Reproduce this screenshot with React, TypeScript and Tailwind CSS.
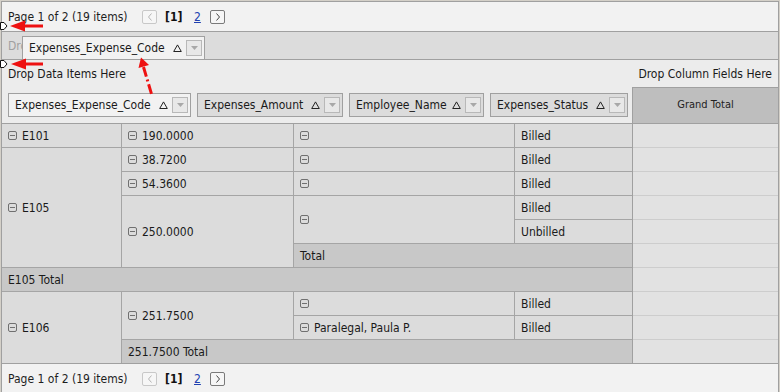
import React from "react";

const Minus = () => (
  <svg width="9" height="9" viewBox="0 0 9 9" className="shrink-0">
    <rect x="0.5" y="0.5" width="8" height="8" rx="1.5" fill="none" stroke="#707070" />
    <line x1="2" y1="4.5" x2="7" y2="4.5" stroke="#707070" />
  </svg>
);

const SortTri = () => (
  <svg width="9" height="8" viewBox="0 0 9 8" className="shrink-0">
    <path d="M4.5 0.9 L8.3 7.5 L0.7 7.5 Z" fill="none" stroke="#222" strokeWidth="1" />
  </svg>
);

const DropBtn = () => (
  <div className="w-[16px] h-[16px] border border-[#b8b8b8] bg-[#e8e8e8] flex items-center justify-center shrink-0">
    <svg width="7" height="4" viewBox="0 0 7 4">
      <path d="M0 0 H7 L3.5 4 Z" fill="#a8a8a8" />
    </svg>
  </div>
);

function FieldBox({ label, className }: { label: string; className: string }) {
  return (
    <div className={"h-[24px] border border-[#a0a0a0] flex items-center pl-[6px] pr-[2px] " + className}>
      <span className="flex-1 whitespace-nowrap overflow-hidden">{label}</span>
      <SortTri />
      <div className="w-[4px]" />
      <DropBtn />
    </div>
  );
}

function Pager() {
  return (
    <div className="h-[29px] flex items-center pl-[6px] text-[12px] text-[#1e1e1e] bg-[#f2f2f2]">
      <span className="w-[124px] whitespace-nowrap">Page 1 of 2 (19 items)</span>
      <div className="ml-[10px] w-[15px] h-[14px] border border-[#c8c8c8] rounded-[2px] bg-[#f6f6f6] flex items-center justify-center">
        <svg width="6" height="8" viewBox="0 0 6 8">
          <path d="M4.5 0.5 L1.5 4 L4.5 7.5" fill="none" stroke="#b4b4b4" strokeWidth="1" />
        </svg>
      </div>
      <span className="ml-[8px] w-[17px] font-bold text-[#111]">[1]</span>
      <span className="ml-[12px] w-[6px] text-[#2040b0] underline">2</span>
      <div className="ml-[10px] w-[15px] h-[14px] border border-[#7a7a7a] rounded-[2px] bg-[#f6f6f6] flex items-center justify-center">
        <svg width="6" height="8" viewBox="0 0 6 8">
          <path d="M1.5 0.5 L4.5 4 L1.5 7.5" fill="none" stroke="#444" strokeWidth="1" />
        </svg>
      </div>
    </div>
  );
}

function Cell({ className, children }: { className: string; children: React.ReactNode }) {
  return <div className={"flex items-center gap-[5px] px-[6px] whitespace-nowrap " + className}>{children}</div>;
}

export default function App() {
  const c = "bg-[#dcdcdc]";
  const t = "bg-[#c8c8c8]";
  return (
    <div className="relative w-[780px] h-[392px] overflow-hidden bg-[#d4d0c8] pt-px pl-px font-[family-name:DejaVu_Sans_Condensed,DejaVu_Sans,sans-serif] font-stretch-condensed text-[12px] text-[#1a1a1a]">
      <div className="w-[778px] border border-[#a0a0a0] bg-[#f2f2f2]">
        <div className="border-b border-[#a0a0a0]">
          <Pager />
        </div>
        <div className="h-[28px] border-b border-[#a0a0a0] bg-[#dcdcdc] flex items-center pl-[6px] text-[#a0a0a0]">
          Dro
        </div>
        <div className="h-[27px] bg-[#ececec] flex items-center justify-between px-[6px]">
          <span>Drop Data Items Here</span>
          <span>Drop Column Fields Here</span>
        </div>
        <div className="h-[36px] bg-[#ececec] flex">
          <div className="w-[630px] flex items-center gap-[6px] pl-[6px]">
            <FieldBox label="Expenses_Expense_Code" className="w-[183px] bg-[#f2f2f2]" />
            <FieldBox label="Expenses_Amount" className="w-[146px] bg-[#dcdcdc]" />
            <FieldBox label="Employee_Name" className="w-[135px] bg-[#dcdcdc]" />
            <FieldBox label="Expenses_Status" className="w-[138px] bg-[#dcdcdc]" />
          </div>
          <div className="flex-1 border-l border-t border-[#a0a0a0] bg-[#bebebe] flex items-center justify-center text-[11px] text-[#222]">
            Grand Total
          </div>
        </div>
        <div className="flex border-t border-[#a0a0a0]">
          <div className="grid grid-cols-[119px_171px_220px_117px] grid-rows-[repeat(10,23px)] gap-px bg-[#a5a5a5]">
            <Cell className={c + " col-start-1 row-start-1"}><Minus />E101</Cell>
            <Cell className={c + " col-start-2 row-start-1"}><Minus />190.0000</Cell>
            <Cell className={c + " col-start-3 row-start-1"}><Minus /></Cell>
            <Cell className={c + " col-start-4 row-start-1"}>Billed</Cell>

            <Cell className={c + " col-start-1 row-start-2 row-span-5"}><Minus />E105</Cell>
            <Cell className={c + " col-start-2 row-start-2"}><Minus />38.7200</Cell>
            <Cell className={c + " col-start-3 row-start-2"}><Minus /></Cell>
            <Cell className={c + " col-start-4 row-start-2"}>Billed</Cell>
            <Cell className={c + " col-start-2 row-start-3"}><Minus />54.3600</Cell>
            <Cell className={c + " col-start-3 row-start-3"}><Minus /></Cell>
            <Cell className={c + " col-start-4 row-start-3"}>Billed</Cell>
            <Cell className={c + " col-start-2 row-start-4 row-span-3"}><Minus />250.0000</Cell>
            <Cell className={c + " col-start-3 row-start-4 row-span-2"}><Minus /></Cell>
            <Cell className={c + " col-start-4 row-start-4"}>Billed</Cell>
            <Cell className={c + " col-start-4 row-start-5"}>Unbilled</Cell>
            <Cell className={t + " col-start-3 col-span-2 row-start-6"}>Total</Cell>

            <Cell className={t + " col-start-1 col-span-4 row-start-7"}>E105 Total</Cell>

            <Cell className={c + " col-start-1 row-start-8 row-span-3"}><Minus />E106</Cell>
            <Cell className={c + " col-start-2 row-start-8 row-span-2"}><Minus />251.7500</Cell>
            <Cell className={c + " col-start-3 row-start-8"}><Minus /></Cell>
            <Cell className={c + " col-start-4 row-start-8"}>Billed</Cell>
            <Cell className={c + " col-start-3 row-start-9"}><Minus />Paralegal, Paula P.</Cell>
            <Cell className={c + " col-start-4 row-start-9"}>Billed</Cell>
            <Cell className={t + " col-start-2 col-span-3 row-start-10"}>251.7500 Total</Cell>
          </div>
          <div className="flex-1 border-l border-[#a0a0a0] flex flex-col gap-px bg-[#cdcdcd]">
            {Array.from({ length: 10 }).map((_, i) => (
              <div key={i} className="h-[23px] bg-[#e2e2e2]" />
            ))}
          </div>
        </div>
        <div className="border-t border-[#a0a0a0]">
          <Pager />
        </div>
      </div>

      {/* dragged header */}
      <div className="absolute left-[22px] top-[36px]">
        <FieldBox label="Expenses_Expense_Code" className="w-[183px] bg-[#f2f2f2]" />
      </div>

      {/* drop indicators and annotation arrows */}
      <svg className="absolute left-0 top-0 pointer-events-none" width="780" height="392" viewBox="0 0 780 392">
        <path d="M0.5 22.5 H4 L7 26 L4 29.5 H0.5 Z" fill="#fff" stroke="#111" strokeWidth="1" />
        <path d="M0.5 60.5 H4 L7 64 L4 67.5 H0.5 Z" fill="#fff" stroke="#111" strokeWidth="1" />
        <path d="M10 26 L25 20.5 L25 31.5 Z" fill="#ee1111" />
        <rect x="24" y="24.5" width="19" height="3" fill="#ee1111" />
        <path d="M11 64 L26 58.5 L26 69.5 Z" fill="#ee1111" />
        <rect x="25" y="62.5" width="18" height="3" fill="#ee1111" />
        <path d="M141 57.5 L149 65 L138.5 68 Z" fill="#ee1111" />
        <line x1="143.5" y1="67" x2="151.5" y2="94" stroke="#ee1111" strokeWidth="3" strokeDasharray="10 3 2 3" />
      </svg>
    </div>
  );
}
